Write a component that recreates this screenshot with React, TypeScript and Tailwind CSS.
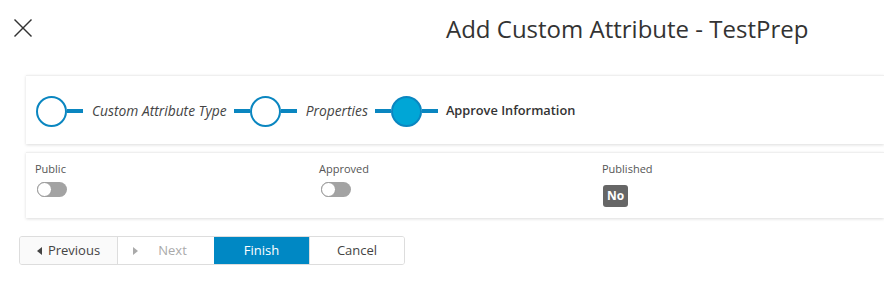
import React from "react";

function Circle({ filled }: { filled?: boolean }) {
  return (
    <div
      className={
        "w-[31px] h-[31px] rounded-full border-2 border-[#0a86c0] shrink-0 " +
        (filled ? "bg-[#00a6d6]" : "bg-white")
      }
    />
  );
}

function Line() {
  return <div className="w-[16px] h-[4px] bg-[#0a86c0] shrink-0" />;
}

function Toggle() {
  return (
    <div className="relative w-[30px] h-[15px] rounded-full bg-[#a3a3a3]">
      <div className="absolute left-0 top-0 w-[15px] h-[15px] rounded-full bg-white border border-[#9a9a9a]" />
    </div>
  );
}

export default function App() {
  return (
    <div
      className="w-[884px] h-[290px] bg-white overflow-hidden text-[#333]"
      style={{ fontFamily: '"Open Sans", "Liberation Sans", sans-serif' }}
    >
      <div className="flex items-start h-[75px]">
        <button className="ml-[14px] mt-[19px] w-[18px] h-[18px] text-[#333]">
          <svg width="18" height="18" viewBox="0 0 18 18" fill="none" stroke="currentColor" strokeWidth="1.4">
            <line x1="0.5" y1="0.5" x2="17.5" y2="17.5" />
            <line x1="17.5" y1="0.5" x2="0.5" y2="17.5" />
          </svg>
        </button>
        <h1 className="ml-[414px] mt-[13px] text-[24px] leading-[32px] text-[#333] whitespace-nowrap">
          Add Custom Attribute - TestPrep
        </h1>
      </div>

      <div className="ml-[26px] h-[69px] bg-white border-t border-[#efefef] shadow-[0_1px_3px_rgba(0,0,0,0.14)] flex items-center pl-[10px] pt-[2px]">
        <Circle />
        <Line />
        <span className="ml-[9px] text-[13.8px] italic text-[#444] whitespace-nowrap">Custom Attribute Type</span>
        <div className="ml-[7px] flex items-center">
          <Line />
          <Circle />
          <Line />
        </div>
        <span className="ml-[9px] text-[13.8px] italic text-[#444] whitespace-nowrap">Properties</span>
        <div className="ml-[7px] flex items-center">
          <Line />
          <Circle filled />
          <Line />
        </div>
        <span className="ml-[8px] text-[12.8px] font-semibold text-[#333] whitespace-nowrap">Approve Information</span>
      </div>

      <div className="ml-[26px] mt-[8px] h-[66px] bg-white border-t border-[#efefef] shadow-[0_1px_3px_rgba(0,0,0,0.14)] grid grid-cols-[284px_283px_283px] pl-[9px] pt-[8px]">
        <div className="flex flex-col">
          <span className="text-[11px] leading-[16px] text-[#555]">Public</span>
          <div className="mt-[5px] ml-[2px]">
            <Toggle />
          </div>
        </div>
        <div className="flex flex-col">
          <span className="text-[11px] leading-[16px] text-[#555]">Approved</span>
          <div className="mt-[5px] ml-[2px]">
            <Toggle />
          </div>
        </div>
        <div className="flex flex-col">
          <span className="text-[11px] leading-[16px] text-[#555]">Published</span>
          <div className="mt-[5px] ml-[1px]">
            <span className="inline-flex items-center justify-center w-[25px] h-[22px] rounded-[3px] bg-[#666] text-white text-[12px] font-bold">
              No
            </span>
          </div>
        </div>
      </div>

      <div className="ml-[19px] mt-[18px] flex w-[386px] h-[29px] border border-[#ddd] rounded-[3px] overflow-hidden text-[13px]">
        <button className="w-[98px] flex items-center justify-center gap-[6px] bg-[#fafafa] text-[#444] border-r border-[#ddd]">
          <svg width="5" height="8" viewBox="0 0 5 8"><path d="M5 0 L0 4 L5 8 Z" fill="#444" /></svg>
          Previous
        </button>
        <button className="w-[96px] flex items-center justify-center gap-[6px] bg-white text-[#aaa]">
          <svg width="5" height="8" viewBox="0 0 5 8" className="-ml-[12px] mr-[14px]"><path d="M0 0 L5 4 L0 8 Z" fill="#aaa" /></svg>
          Next
        </button>
        <button className="w-[95px] flex items-center justify-center bg-[#0088c4] text-white">Finish</button>
        <button className="flex-1 flex items-center justify-center bg-white text-[#444] border-l border-[#ddd]">Cancel</button>
      </div>
    </div>
  );
}
